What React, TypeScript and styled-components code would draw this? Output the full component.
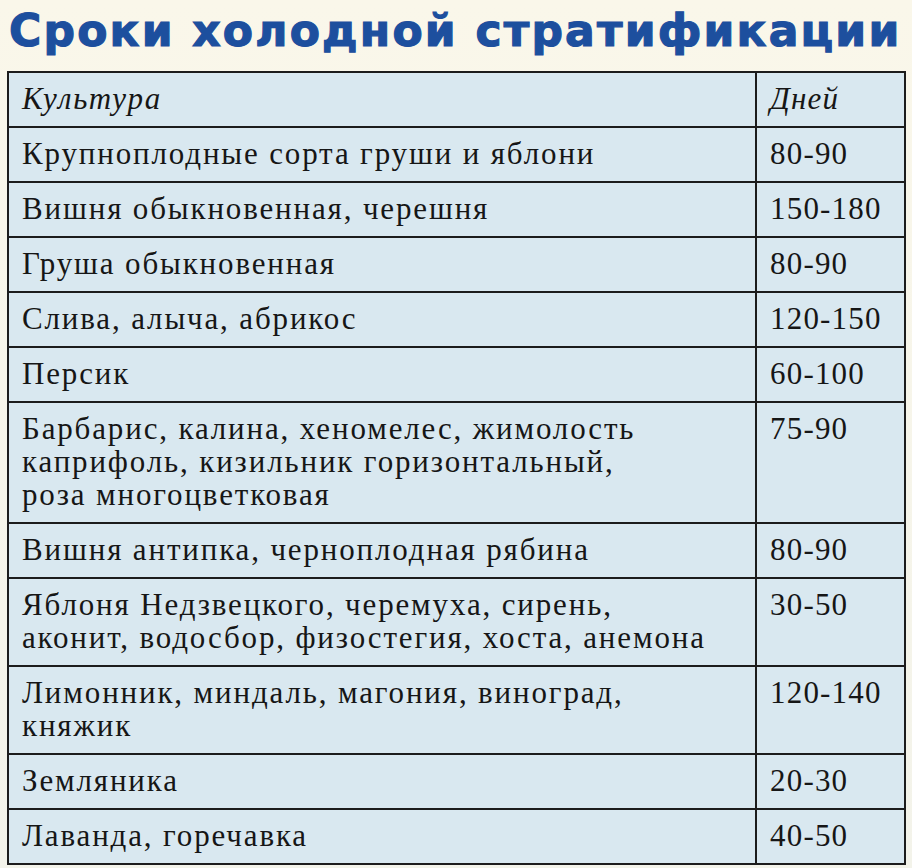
import React from "react";
import styled, { createGlobalStyle } from "styled-components";

const Global = createGlobalStyle`
  html, body { margin: 0; padding: 0; }
  body {
    background: #f8f6e8;
    width: 912px;
    height: 868px;
    overflow: hidden;
  }
`;

const Page = styled.div`
  width: 912px;
  height: 868px;
  display: flex;
  flex-direction: column;
  background: linear-gradient(180deg, #faf7ea 0%, #f3f3ea 100%);
`;

const Title = styled.h1`
  margin: 0;
  padding: 5px 0 0 9px;
  height: 65px;
  box-sizing: border-box;
  font-family: "DejaVu Sans", "Verdana", sans-serif;
  font-weight: 900;
  font-size: 44px;
  line-height: 52px;
  color: #1d4f9e;
  letter-spacing: 2.2px;
  -webkit-text-stroke: 1.2px #1d4f9e;
  white-space: nowrap;
`;

const Table = styled.div`
  margin: 6px 0 0 7px;
  width: 895px;
  border: 2px solid #1c1c1c;
  border-bottom: none;
  background: #d9e8f0;
  display: flex;
  flex-direction: column;
`;

const Row = styled.div`
  display: grid;
  grid-template-columns: 746px 1fr;
  border-bottom: 2px solid #1c1c1c;
`;

const Cell = styled.div<{ $italic?: boolean; $right?: boolean }>`
  padding: 9px 6px 11px 13px;
  font-family: "Liberation Serif", "Times New Roman", serif;
  font-size: 31px;
  line-height: 33px;
  color: #161616;
  font-style: ${(p) => (p.$italic ? "italic" : "normal")};
  letter-spacing: 1.85px;
  white-space: nowrap;
  ${(p) => (p.$right ? "border-left: 2px solid #1c1c1c; letter-spacing: 1.2px;" : "")}
`;

const rows: [string[], string][] = [
  [["Крупноплодные сорта груши и яблони"], "80-90"],
  [["Вишня обыкновенная, черешня"], "150-180"],
  [["Груша обыкновенная"], "80-90"],
  [["Слива, алыча, абрикос"], "120-150"],
  [["Персик"], "60-100"],
  [
    [
      "Барбарис, калина, хеномелес, жимолость",
      "каприфоль, кизильник горизонтальный,",
      "роза многоцветковая",
    ],
    "75-90",
  ],
  [["Вишня антипка, черноплодная рябина"], "80-90"],
  [
    [
      "Яблоня Недзвецкого, черемуха, сирень,",
      "аконит, водосбор, физостегия, хоста, анемона",
    ],
    "30-50",
  ],
  [["Лимонник, миндаль, магония, виноград,", "княжик"], "120-140"],
  [["Земляника"], "20-30"],
  [["Лаванда, горечавка"], "40-50"],
];

export default function App() {
  return (
    <Page>
      <Global />
      <Title>Сроки холодной стратификации</Title>
      <Table>
        <Row>
          <Cell $italic>Культура</Cell>
          <Cell $italic $right>
            Дней
          </Cell>
        </Row>
        {rows.map(([lines, days], i) => (
          <Row key={i}>
            <Cell>
              {lines.map((l, j) => (
                <div key={j}>{l}</div>
              ))}
            </Cell>
            <Cell $right>{days}</Cell>
          </Row>
        ))}
      </Table>
    </Page>
  );
}
